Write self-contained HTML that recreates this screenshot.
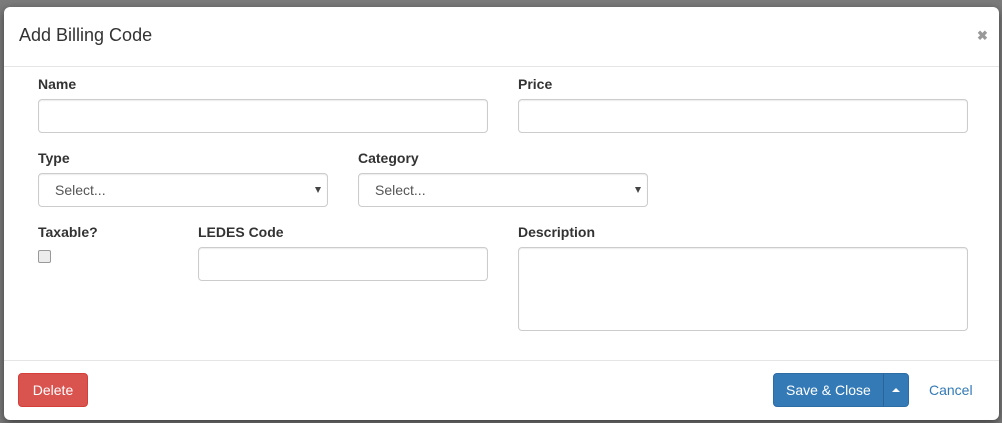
<!DOCTYPE html>
<html><head><style>
body{margin:0;width:1002px;height:423px;background:#7b7b7b;font-family:"Liberation Sans",Arial,sans-serif;position:relative;overflow:hidden}
.m{position:absolute;left:4px;top:7px;width:995px;height:413px;background:#fff;border-radius:6px;box-shadow:0 3px 9px rgba(0,0,0,.5)}
.a{position:absolute}
.lbl{position:absolute;font-size:14px;font-weight:bold;color:#333}
.in{position:absolute;border:1px solid #ccc;border-radius:4px;box-sizing:border-box;background:#fff;box-shadow:inset 0 1px 1px rgba(0,0,0,.075)}
.sel{font-size:14px;color:#555;padding-left:16px;line-height:32px}
.sel:after{content:"";position:absolute;right:6px;top:13px;border-left:3px solid transparent;border-right:3px solid transparent;border-top:6px solid #444}
</style></head><body>
<div class="m">
<div class="a" style="left:15px;top:18px;font-size:18px;color:#333">Add Billing Code</div>
<div class="a" style="left:973px;top:21px;font-size:13px;font-weight:bold;color:#999">✖</div>
<div class="a" style="left:0;top:59px;width:995px;height:1px;background:#e5e5e5"></div>
<div class="lbl" style="left:34px;top:69px">Name</div>
<div class="in" style="left:34px;top:92px;width:450px;height:34px"></div>
<div class="lbl" style="left:514px;top:69px">Price</div>
<div class="in" style="left:514px;top:92px;width:450px;height:34px"></div>
<div class="lbl" style="left:34px;top:143px">Type</div>
<div class="in sel" style="left:34px;top:166px;width:290px;height:34px">Select...</div>
<div class="lbl" style="left:354px;top:143px">Category</div>
<div class="in sel" style="left:354px;top:166px;width:290px;height:34px">Select...</div>
<div class="lbl" style="left:34px;top:217px">Taxable?</div>
<div class="a" style="left:34px;top:243px;width:11px;height:11px;border:1px solid #999;border-radius:2px;background:#ececec"></div>
<div class="lbl" style="left:194px;top:217px">LEDES Code</div>
<div class="in" style="left:194px;top:240px;width:290px;height:34px"></div>
<div class="lbl" style="left:514px;top:217px">Description</div>
<div class="in" style="left:514px;top:240px;width:450px;height:84px"></div>
<div class="a" style="left:0;top:353px;width:995px;height:1px;background:#e5e5e5"></div>
<div class="a" style="left:14px;top:366px;width:70px;height:34px;background:#d9534f;border:1px solid #d43f3a;box-sizing:border-box;border-radius:4px;color:#fff;font-size:14px;text-align:center;line-height:32px">Delete</div>
<div class="a" style="left:769px;top:366px;width:136px;height:34px;background:#337ab7;border:1px solid #2e6da4;box-sizing:border-box;border-radius:4px;color:#fff;font-size:14px;line-height:32px">
<span style="position:absolute;left:12px">Save &amp; Close</span>
<span style="position:absolute;left:109px;top:0;width:1px;height:32px;background:#2a6496"></span>
<span style="position:absolute;left:118px;top:14px;border-left:4px solid transparent;border-right:4px solid transparent;border-bottom:4px solid #fff"></span>
</div>
<div class="a" style="left:925px;top:375px;font-size:14px;color:#337ab7">Cancel</div>
</div>
</body></html>
